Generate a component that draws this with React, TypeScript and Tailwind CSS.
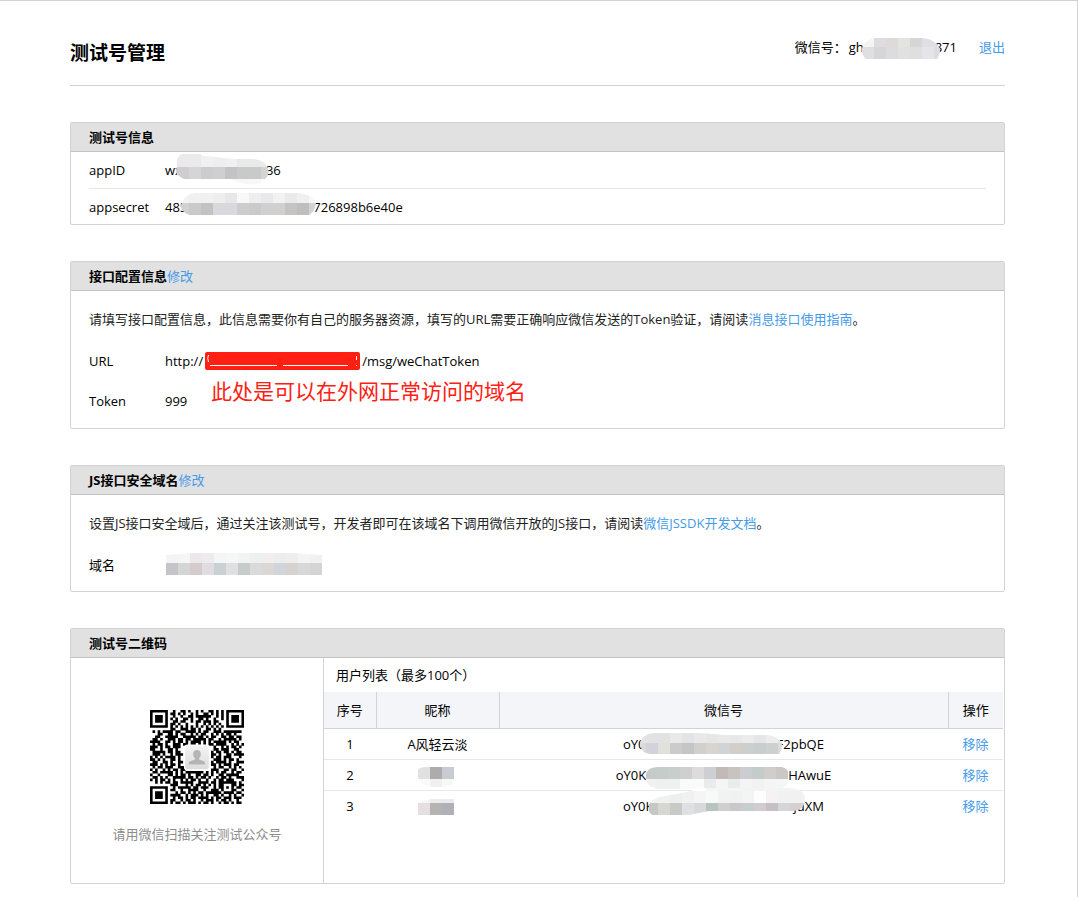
import React from "react";

interface MosaicProps {
    width: number;
    x?: number;
    y: number;
    firstHeight: number;
    rows: string[];
    outline: string;
    id: string;
    className?: string;
}

// Blurred-out part of a value. Each row is a list of tile colours, 12px wide.
const Mosaic: React.FC<MosaicProps> = ({ width, x = 0, y, firstHeight, rows, outline, id, className = "" }) => {
    return (
        <svg
            width={width}
            height={20}
            viewBox={`0 0 ${width} 20`}
            aria-hidden="true"
            className={`relative shrink-0 overflow-visible ${className}`}
        >
            <clipPath id={id}>
                <path d={outline} />
            </clipPath>
            <g clipPath={`url(#${id})`} shapeRendering="crispEdges">
                {rows.map((row, r) =>
                    row.split(" ").map((color, c) => (
                        <rect
                            key={`${r}-${c}`}
                            x={x + c * 12}
                            y={r === 0 ? y : y + firstHeight + (r - 1) * 12}
                            width={12}
                            height={r === 0 ? firstHeight : 12}
                            fill={`#${color}`}
                        />
                    ))
                )}
            </g>
        </svg>
    );
};

const qrRows = [
    "#######..#..##.#..#.#..##.#.#.#######",
    "#.....#.##.#.#..#.#..##.#.#.#.#.....#",
    "#.###.#..#..#..##.######..#.#.#.###.#",
    "#.###.#.#.#..##.#..##.#..#..#.#.###.#",
    "#.###.#..##.##..#.##.###.##...#.###.#",
    "#.....#.##.#..#...#..#.#.#.#..#.....#",
    "#######.#.#.#.#.#.#.#.#.#.#.#.#######",
    "........##..###.##.#..##.#.#.........",
    ".#.#.####.##..####.#.##..###.#######.",
    "...##..##.#.##..#.#.##..#.#.#.##.#...",
    "..##..#####..#####.##.#.##..##.##.##.",
    ".##.#..###.##.##.#####.##..#.#####.#.",
    "####..##.#.##.#.####.#.#.#####.#.##..",
    ".#.##.#..###.##.##.#.#.##.####..#.#.#",
    "###.#.##.###.............#..#.#.##.#.",
    "##..#..##.#..............##.###..##..",
    ".#####.##.##............#.##.##.#.##.",
    ".###.#..#.###...........##.#..##.####",
    "#.#.#.####.#............#.##.###...#.",
    "##.#.#..##.#.............###.#.##.#..",
    ".##..##.#..##...........#.####.#..###",
    "###.#.#.##.#............##.#.###.##..",
    ".#.##.###..###...........#.##..#.#.#.",
    "#.#..#.#.##.##..........###..##.##..#",
    ".##.#####.#.#.#######.#.#.#.##..#.##.",
    "#..#...##.#.##.#..##.##.#..##.#####..",
    ".##.#.#..#####.##.#.##.#..#.##.#..###",
    "#.#.##.#.#..#.#.##.#..#..#.##.###...#",
    "..#.#.##.##.#####..####.##.#######.#.",
    "........###...#.#.##.#.#.#.##...##.##",
    "#######..#.#####.##.###..#.##.#.#.##.",
    "#.....#.##..#..####..#..###.#...##..#",
    "#.###.#...#.##.#.#.##.######.####.##.",
    "#.###.#.####..#.###.#.#..##.#..#.#..#",
    "#.###.#..#.##.#.##.####.#.##.###.###.",
    "#.....#.##..#.##.#..#.###.#.##.#..#..",
    "#######.#.##.#.###.#.##.#..#.##.#.##.",
];

const QrCode: React.FC = () => {
    return (
        <svg width={94} height={94} viewBox="0 0 37 37" role="img" aria-label="测试号二维码">
            <path
                fill="#000"
                d={qrRows
                    .map((row, y) =>
                        row
                            .split("")
                            .map((cell, x) => (cell === "#" ? `M${x} ${y}h1.03v1.03h-1.03z` : ""))
                            .join("")
                    )
                    .join("")}
            />
            <defs>
                <linearGradient id="avatar" x1="0" y1="0" x2="0" y2="1">
                    <stop offset="0" stopColor="#f4f4f4" />
                    <stop offset="1" stopColor="#dcdcdc" />
                </linearGradient>
            </defs>
            <rect x="13.6" y="13.8" width="9.8" height="9.8" rx="1.2" fill="url(#avatar)" stroke="#fff" strokeWidth=".5" />
            <path
                fill="#b5b5b5"
                d="M18.5 15.7c1 0 1.6.7 1.5 1.7 0 .7-.3 1.2-.7 1.6v.5c.9.4 2.3.6 2.4 1.4v.6h-6.4v-.6c.1-.8 1.5-1 2.4-1.4V19c-.4-.4-.7-.9-.7-1.6-.1-1 .5-1.7 1.5-1.7z"
            />
        </svg>
    );
};

interface PanelProps {
    title: string;
    editable?: boolean;
    children: React.ReactNode;
}

const Panel: React.FC<PanelProps> = ({ title, editable = false, children }) => {
    return (
        <section className="rounded-xs border border-[#d3d3d3]">
            <h2 className="flex h-[29px] items-center border-b border-[#c4c4c4] bg-[#e1e1e1] px-[18px] pb-px font-bold">
                {title}
                {editable && (
                    <a href="#" className="font-normal text-[#459ae9]">
                        修改
                    </a>
                )}
            </h2>
            {children}
        </section>
    );
};

interface FieldProps {
    label: string;
    className?: string;
    children?: React.ReactNode;
}

const Field: React.FC<FieldProps> = ({ label, className = "", children }) => {
    return (
        <div className={`flex items-center ${className}`}>
            <dt className="w-[76px] shrink-0">{label}</dt>
            <dd className="flex items-center">{children}</dd>
        </div>
    );
};

const users = [
    {
        name: "A风轻云淡",
        openid: (
            <>
                oY0
                <Mosaic
                    id="u1"
                    className="-ml-[6px]"
                    width={140}
                    x={-6}
                    y={-1}
                    firstHeight={10}
                    rows={[
                        "e4e4e6 e2e2e5 e2e2e3 e9e9e9 e4e4e6 e9e9e9 e6e6e6 e9e9e9 e8e8e8 ececec e6e6e8 ededed e4e4e6",
                        "dcd8dc d3d2da e1e0db cbcbcb c4c5c6 d2d0cd d8d5d1 d0d4d6 d2ceca cbd0ce c8cdcd ccd1d0 dedadb",
                    ]}
                    outline="M0 9Q2 0 14-1H60L86 1H128Q138 2 142 9Q142 17 139 20H10Q1 20 0 9Z"
                />
                <span className="-ml-[3px]">F2pbQE</span>
            </>
        ),
    },
    {
        name: (
            <Mosaic
                id="n2"
                className="mr-1"
                width={36}
                y={2}
                firstHeight={12}
                rows={["e0e0df adabab c8ccd0", "f8f9f9 f0f0f1 f7f9f9"]}
                outline="M0 5Q2 2 8 2H36V14L34 20Q18 24 6 20Q0 16 0 12Z"
            />
        ),
        openid: (
            <>
                oY0K
                <Mosaic
                    id="u2"
                    width={142}
                    x={-2}
                    y={2}
                    firstHeight={12}
                    rows={[
                        "c6cbca c6ccca c8cecb cfcfd1 dedcda cfcfd3 c1bab6 c8c3bf cbcdd0 c4cccb d0cdca cbc7c7",
                        "f0f2f2 eff1f1 eff1f1 fafbfb f9fbfb eaebed f5f5f6 e8ecea f4f4f4 f0f2f4 f5f5f5 f5f7f7",
                    ]}
                    outline="M0 9Q2 2 12 2H136Q144 4 144 14Q142 22 134 24H16Q0 24 0 12Z"
                />
                HAwuE
            </>
        ),
    },
    {
        name: (
            <Mosaic
                id="n3"
                className="mr-1"
                width={36}
                y={3}
                firstHeight={4}
                rows={["f7f4f3 ebebeb e9e9ef", "e5dfe1 b5b4b3 b0b1b8"]}
                outline="M0 7L8 4L14 3H36V19H0Z"
            />
        ),
        openid: (
            <>
                oY0K
                <Mosaic
                    id="u3"
                    className="z-10 -ml-[5px]"
                    width={152}
                    x={-3}
                    y={-9}
                    firstHeight={4}
                    rows={[
                        "fff fff fff fff fff f4f6f6 f4f4f4 f4f5f5 f2f3f3 f3f3f5 f4f4f4 f3f3f4 f5f5f5 f5f5f5",
                        "f0f1f1 eff1f1 eceef0 f1f1f2 f5f5f5 f5faf8 f1f2f2 f0f2f1 f4f4f5 fdfdfd f6f1f2 f0f1f1 f1f1f1 f3f3f3",
                        "c5c8c5 d6d6d3 c9c9c5 dfe0e3 d7d9da b8c2be d0cfd0 cbc8cb c5cdcd d2cbcf c5bfc6 d4d5d8 d7d0cf d3d4d5",
                    ]}
                    outline="M0 9Q2 2 16 0L38-4L50-8H140Q156-8 156 3Q156 14 144 15H60L40 19H4Q-1 18 0 9Z"
                />
                <span className="-ml-[7px]">jdXM</span>
            </>
        ),
    },
];

const App: React.FC = () => {
    return (
        <main className="border-t border-r border-[#d3d3d3] bg-white pt-9 pr-[72px] pb-[13px] pl-[70px] font-['Open_Sans','Noto_Sans_CJK_SC',sans-serif] text-[13px] leading-5 text-black">
            <header className="flex h-[49px] items-start justify-between border-b border-[#d3d3d3]">
                <h1 className="text-[19px] leading-8 font-bold">测试号管理</h1>
                <div className="flex items-center">
                    微信号：
                    <span className="ml-[2px]">gh</span>
                    <Mosaic
                        id="account"
                        className="-ml-[2px]"
                        width={76}
                        y={1}
                        firstHeight={9}
                        rows={["f4f4f3 dddce0 dcdbda e4e3e0 d5d6d6 e0dfe5 e0dfe1", "dfdee0 d7d5d7 dcdbdd e2e1df dfdfdf e5e4e8 dedcdd"]}
                        outline="M0 11Q3 3 12 1H60Q74 2 78 12Q78 18 75 22H4Q-1 18 0 11Z"
                    />
                    <span className="-ml-[3px]">871</span>
                    <a href="#" className="ml-[22px] text-[#459ae9]">
                        退出
                    </a>
                </div>
            </header>

            <div className="mt-9 flex flex-col gap-9">
                <Panel title="测试号信息">
                    <dl className="px-[18px]">
                        <Field label="appID" className="h-[37px] border-b border-[#e7e7eb]">
                            wx
                            <Mosaic
                                id="appid"
                                className="-ml-[6px]"
                                width={92}
                                x={-11}
                                y={-6}
                                firstHeight={13}
                                rows={[
                                    "ececec ebe9eb eae9eb f0f0f2 eeeef1 f0f0f1 e9e9ea e8e9e9 ebebeb",
                                    "d0d0d0 cfcdce d5d5d5 cbcccb cfcfcf c3c2c5 c9c9cb c8cac8 d5d4d4",
                                    "fafafa fafafa fafafa fafafa fafafa f8f8f8 f7f7f7 f8f8f8 f9f9f9",
                                ]}
                                outline="M1 0C2-6 8-7 14-7Q24-7 28-4L60-1L78-1Q90 1 91 7Q95 14 89 19L84 24Q66 26 54 19H8Q-3 14 1 7Z"
                            />
                            <span className="-ml-[2px]">36</span>
                        </Field>
                        <Field label="appsecret" className="h-[35px]">
                            485
                            <Mosaic
                                id="secret"
                                className="-ml-[6px]"
                                width={134}
                                x={-4}
                                y={-4}
                                firstHeight={10}
                                rows={[
                                    "f3f3f3 f0f0f1 f1f1f2 eeeeef e7e7e8 f8f8f9 eeeeef e9e9eb f2f2f2 eaeaec f0f0f0 f7f7f7",
                                    "d1d2d0 cac9cb c4c2c0 d7d9dc d7d9de cdcdcf cbcacb d0cfd1 d1d0cf c6c3c3 c0bfbe d2d3d5",
                                ]}
                                outline="M0 8Q3-3 14-4H116Q132-3 135 6Q134 15 128 18H8Q-1 14 0 8Z"
                            />
                            <span className="-ml-[2px]">726898b6e40e</span>
                        </Field>
                    </dl>
                </Panel>

                <Panel title="接口配置信息" editable>
                    <div className="px-[18px] pt-[18px] pb-[17px]">
                        <p className="text-[#222]">
                            请填写接口配置信息，此信息需要你有自己的服务器资源，填写的URL需要正确响应微信发送的Token验证，请阅读
                            <a href="#" className="text-[#459ae9]">
                                消息接口使用指南
                            </a>
                            。
                        </p>
                        <dl className="mt-[22px] flex flex-col gap-5">
                            <Field label="URL">
                                http://
                                <svg width="155" height="20" viewBox="0 0 155 20" aria-hidden="true" className="mx-[2px]">
                                    <rect y="1" width="155" height="18" rx="2" fill="#ff2013" />
                                    <path
                                        d="M5 14.5H72M78 14.5H143M151 14.5h1M3.5 4Q2 7 3.5 11M151.5 5v4"
                                        stroke="#fff"
                                        strokeWidth="1"
                                        fill="none"
                                    />
                                </svg>
                                /msg/weChatToken
                            </Field>
                            <Field label="Token">
                                <span className="relative">
                                    999
                                    <span className="absolute -top-4 left-[46px] text-[21px] leading-8 whitespace-nowrap text-[#ff2013]">
                                        此处是可以在外网正常访问的域名
                                    </span>
                                </span>
                            </Field>
                        </dl>
                    </div>
                </Panel>

                <Panel title="JS接口安全域名" editable>
                    <div className="px-[18px] pt-[18px] pb-4">
                        <p className="text-[#222]">
                            设置JS接口安全域后，通过关注该测试号，开发者即可在该域名下调用微信开放的JS接口，请阅读
                            <a href="#" className="text-[#459ae9]">
                                微信JSSDK开发文档
                            </a>
                            。
                        </p>
                        <dl className="mt-[22px]">
                            <Field label="域名">
                                <Mosaic
                                    id="domain"
                                    className="ml-px"
                                    width={156}
                                    y={-2}
                                    firstHeight={10}
                                    rows={[
                                        "f4f4f5 f5f5f5 ebe7eb ececee f3f6f5 f5f7f6 f2f4f3 edf0f0 f1eeed eceeed efedef f4f4f4 f1f1f2",
                                        "c6c4c9 d4d5d4 d4cbcd e0dce2 cad1d2 e0e0e3 c7cccb dadada dbd7d6 d1d4d9 d5d2cf d8d8d8 d3d4d6",
                                    ]}
                                    outline="M0 0L26-2H128L156 0V20H0Z"
                                />
                            </Field>
                        </dl>
                    </div>
                </Panel>

                <Panel title="测试号二维码">
                    <div className="flex min-h-[225px]">
                        <div className="flex w-[253px] shrink-0 flex-col items-center border-r border-[#d3d3d3] pt-[52px]">
                            <QrCode />
                            <p className="mt-5 text-[#8d8d8d]">请用微信扫描关注测试公众号</p>
                        </div>
                        <div className="min-w-0 flex-1 pr-px">
                            <h3 className="px-3 pt-[7px] pb-[7px]">用户列表（最多100个）</h3>
                            <table className="w-full table-fixed border-collapse text-center">
                                <thead>
                                    <tr className="h-9 border-b border-[#d3d3d3] bg-[#f4f5f9]">
                                        <th className="w-[52px] border-r border-[#d3d3d3] font-normal">序号</th>
                                        <th className="w-[123px] border-r border-[#d3d3d3] font-normal">昵称</th>
                                        <th className="border-r border-[#d3d3d3] font-normal">微信号</th>
                                        <th className="w-[55px] font-normal">操作</th>
                                    </tr>
                                </thead>
                                <tbody>
                                    {users.map((user, index) => (
                                        <tr key={index} className="h-[31px] border-b border-[#e7e7eb] last:border-b-0">
                                            <td>{index + 1}</td>
                                            <td>
                                                <div className="flex items-center justify-center">{user.name}</div>
                                            </td>
                                            <td>
                                                <div className="flex items-center justify-center">{user.openid}</div>
                                            </td>
                                            <td>
                                                <a href="#" className="text-[#459ae9]">
                                                    移除
                                                </a>
                                            </td>
                                        </tr>
                                    ))}
                                </tbody>
                            </table>
                        </div>
                    </div>
                </Panel>
            </div>
        </main>
    );
};

export default App;
